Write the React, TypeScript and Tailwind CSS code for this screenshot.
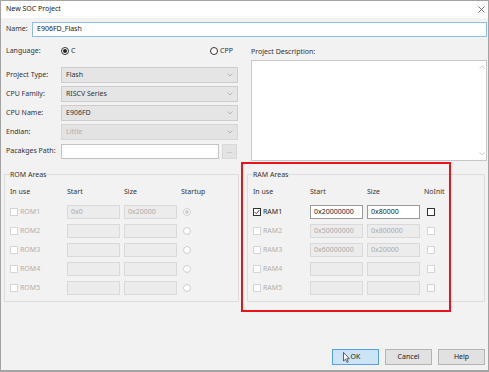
import type { ReactNode } from "react";

const FONT = "font-['Segoe_UI','Noto_Sans','Liberation_Sans',sans-serif]";

function Chevron({ down = true, color = "#a8a8a8" }: { down?: boolean; color?: string }) {
  return (
    <svg width={6} height={4} viewBox="0 0 6 4" aria-hidden>
      <polyline
        points={down ? "0.5,0.5 3,3 5.5,0.5" : "0.5,3.5 3,1 5.5,3.5"}
        fill="none"
        stroke={color}
        strokeWidth={0.8}
      />
    </svg>
  );
}

function Radio({ checked, disabled }: { checked?: boolean; disabled?: boolean }) {
  return (
    <span
      className={
        "flex h-[8px] w-[8px] shrink-0 items-center justify-center rounded-full border bg-white " +
        (disabled ? "border-[#cfcfcf]" : "border-[#333]")
      }
    >
      {checked && (
        <span
          className={
            "h-[4px] w-[4px] rounded-full " + (disabled ? "bg-[#cfcfcf]" : "bg-[#222]")
          }
        />
      )}
    </span>
  );
}

function Check({ checked, disabled }: { checked?: boolean; disabled?: boolean }) {
  return (
    <span
      className={
        "flex h-[8px] w-[8px] shrink-0 items-center justify-center border bg-white " +
        (disabled ? "border-[#d6d6d6]" : "border-[#333]")
      }
    >
      {checked && (
        <svg width={6} height={6} viewBox="0 0 6 6" aria-hidden>
          <polyline points="0.6,3 2.3,4.8 5.4,1" fill="none" stroke="#333" strokeWidth={0.8} />
        </svg>
      )}
    </span>
  );
}

function Select({ value, disabled }: { value: string; disabled?: boolean }) {
  return (
    <div
      className={
        "flex h-[16px] w-[177px] items-center justify-between border pl-[4px] pr-[4px] " +
        (disabled
          ? "border-[#d6d6d6] bg-[#e3e3e3] text-[#b0b0b0]"
          : "border-[#cdcdcd] bg-[#e5e5e5] text-[#333]")
      }
    >
      <span>{value}</span>
      <Chevron />
    </div>
  );
}

function Field({ value, enabled }: { value?: string; enabled?: boolean }) {
  return (
    <div
      className={
        "flex h-[14px] items-center border px-[3px] " +
        (enabled
          ? "border-[#9a9a9a] bg-white text-[#222]"
          : "border-[#d9d9d9] bg-[#ececec] text-[#ababab]")
      }
    >
      {value}
    </div>
  );
}

function FormRow({ label, children, className }: { label: string; children: ReactNode; className?: string }) {
  return (
    <div className={"flex items-center " + (className ?? "")}>
      <span className="w-[55px] shrink-0 text-[#333]">{label}</span>
      {children}
    </div>
  );
}

interface AreaRow {
  name: string;
  start?: string;
  size?: string;
  used?: boolean;
  flag?: boolean;
}

const ROM_ROWS: AreaRow[] = [
  { name: "ROM1", start: "0x0", size: "0x20000", flag: true },
  { name: "ROM2" },
  { name: "ROM3" },
  { name: "ROM4" },
  { name: "ROM5" },
];

const RAM_ROWS: AreaRow[] = [
  { name: "RAM1", start: "0x20000000", size: "0x80000", used: true },
  { name: "RAM2", start: "0x50000000", size: "0x800000" },
  { name: "RAM3", start: "0x60000000", size: "0x20000" },
  { name: "RAM4" },
  { name: "RAM5" },
];

const COLS = "grid grid-cols-[53px_53px_53px_1fr] gap-x-[4px] pl-[5px]";

function AreaGroup({
  title,
  last,
  rows,
  kind,
  className,
}: {
  title: string;
  last: string;
  rows: AreaRow[];
  kind: "rom" | "ram";
  className?: string;
}) {
  return (
    <fieldset className={"border border-[#dddddd] pb-[6px] " + (className ?? "")}>
      <legend className="ml-[5px] px-0 leading-[11px] text-[#333]">{title}</legend>
      <div className={COLS + " mt-[6px] mb-[7px] leading-[12px] text-[#333]"}>
        <span>In use</span>
        <span>Start</span>
        <span>Size</span>
        <span>{last}</span>
      </div>
      <div className={COLS + " gap-y-[5px]"}>
        {rows.map((r) => (
          <div key={r.name} className="contents">
            <div className="flex h-[14px] items-center gap-[2px]">
              <Check checked={r.used} disabled={!r.used} />
              <span className={r.used ? "text-[#222]" : "text-[#b0b0b0]"}>{r.name}</span>
            </div>
            <Field value={r.start} enabled={r.used} />
            <Field value={r.size} enabled={r.used} />
            <div className="flex h-[14px] items-center">
              {kind === "rom" ? (
                <span className="ml-[2px]">
                  <Radio checked={r.flag} disabled />
                </span>
              ) : (
                <span className="ml-[3px]">
                  <Check disabled={!r.used} />
                </span>
              )}
            </div>
          </div>
        ))}
      </div>
    </fieldset>
  );
}

function Button({ label, primary }: { label: string; primary?: boolean }) {
  return (
    <div
      className={
        "flex h-[16px] w-[47px] items-center justify-center border text-[#222] " +
        (primary ? "border-[#5aa0e0] bg-[#cce4f7]" : "border-[#b4b4b4] bg-[#e1e1e1]")
      }
    >
      {label}
    </div>
  );
}

export default function App() {
  return (
    <div
      className={
        "relative flex h-[372px] w-[489px] flex-col overflow-hidden border border-b-2 border-[#a3a3a3] bg-[#f2f2f2] text-[7px] " +
        FONT
      }
    >
      {/* title bar */}
      <div className="flex h-[17px] shrink-0 items-center justify-between bg-white pl-[5px] pr-[3px] text-[#222]">
        <span>New SOC Project</span>
        <svg width={7} height={7} viewBox="0 0 7 7" aria-hidden>
          <path d="M0.5 0.5 L6.5 6.5 M6.5 0.5 L0.5 6.5" stroke="#555" strokeWidth={0.8} />
        </svg>
      </div>

      <div className="flex flex-1 flex-col pl-[5px] pr-[1px]">
        <div className="mt-[4px] flex h-[15px] items-center">
          <span className="w-[26px] shrink-0 text-[#333]">Name:</span>
          <div className="flex h-[15px] flex-1 items-center border border-[#8dbde9] bg-white px-[4px] text-[#222]">
            E906FD_Flash
          </div>
        </div>

        <div className="mt-[7px] flex gap-[13px]">
          <div className="flex w-[232px] flex-col">
            <FormRow label="Language:" className="h-[14px]">
              <div className="flex flex-1 items-center justify-between pr-[5px]">
                <div className="flex items-center gap-[2px]">
                  <Radio checked />
                  <span className="text-[#333]">C</span>
                </div>
                <div className="flex items-center gap-[2px]">
                  <Radio />
                  <span className="text-[#333]">CPP</span>
                </div>
              </div>
            </FormRow>
            <FormRow label="Project Type:" className="mt-[9px]">
              <Select value="Flash" />
            </FormRow>
            <FormRow label="CPU Family:" className="mt-[3px]">
              <Select value="RISCV Series" />
            </FormRow>
            <FormRow label="CPU Name:" className="mt-[3px]">
              <Select value="E906FD" />
            </FormRow>
            <FormRow label="Endian:" className="mt-[3px]">
              <Select value="Little" disabled />
            </FormRow>
            <FormRow label="Pacakges Path:" className="mt-[4px]">
              <div className="h-[15px] w-[158px] border border-[#c4c4c4] bg-white" />
              <div className="ml-[3px] flex h-[15px] w-[15px] items-center justify-center border border-[#d9d9d9] bg-[#e3e3e3] text-[#b0b0b0]">
                ...
              </div>
            </FormRow>
          </div>

          <div className="flex w-[236px] flex-col">
            <span className="flex h-[16px] items-center text-[#333]">Project Description:</span>
            <div className="flex h-[101px] justify-end border border-[#c8c8c8] bg-white">
              <div className="flex w-[9px] flex-col items-center justify-between py-[4px]">
                <Chevron down={false} color="#c4c4c4" />
                <Chevron color="#c4c4c4" />
              </div>
            </div>
          </div>
        </div>

        <div className="-ml-[2px] mt-[8px] flex gap-[8px]">
          <AreaGroup title="ROM Areas" last="Startup" rows={ROM_ROWS} kind="rom" className="w-[235px]" />
          <AreaGroup title="RAM Areas" last="NoInit" rows={RAM_ROWS} kind="ram" className="w-[238px]" />
        </div>

        <div className="mb-[5px] mt-auto flex justify-end gap-[6px] pr-[2px]">
          <Button label="OK" primary />
          <Button label="Cancel" />
          <Button label="Help" />
        </div>
      </div>

      {/* annotation highlight */}
      <div className="pointer-events-none absolute left-[240px] top-[161px] h-[150px] w-[210px] border-2 border-[#e8131b]" />

      {/* mouse pointer */}
      <svg className="absolute left-[342px] top-[351px]" width={7} height={11} viewBox="0 0 7 11" aria-hidden>
        <path d="M0.5 0.5 L0.5 9 L2.5 7.2 L4 10.4 L5.2 9.8 L3.8 6.7 L6.3 6.7 Z" fill="#fff" stroke="#222" strokeWidth={0.7} />
      </svg>
    </div>
  );
}
